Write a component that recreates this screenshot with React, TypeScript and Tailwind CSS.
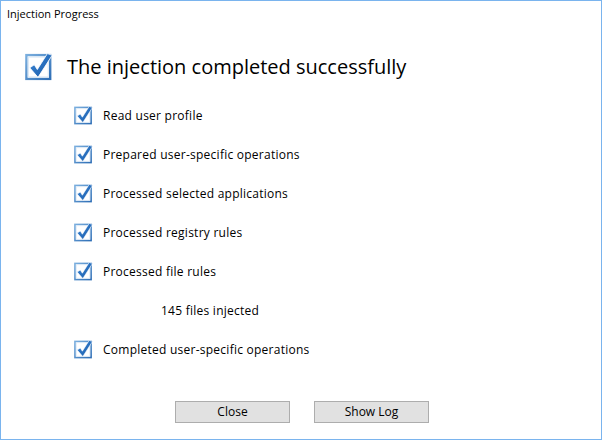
import React from "react";

function Check({ size }: { size: number }) {
  return (
    <svg width={size} height={size} viewBox="0 0 20 20" className="shrink-0 overflow-visible">
      <defs>
        <linearGradient id={`g${size}`} x1="0" y1="0" x2="1" y2="1">
          <stop offset="0" stopColor="#7aaede" />
          <stop offset="1" stopColor="#2f6fb6" />
        </linearGradient>
        <linearGradient id={`c${size}`} x1="0" y1="0" x2="1" y2="1">
          <stop offset="0" stopColor="#3f8ad8" />
          <stop offset="1" stopColor="#1557a6" />
        </linearGradient>
      </defs>
      <rect x="1" y="1.5" width="17" height="17" fill="#fff" stroke={`url(#g${size})`} strokeWidth="1.7" />
      <rect x="2.4" y="2.9" width="14.2" height="14.2" fill="none" stroke="#dce9f6" strokeWidth="0.8" />
      <path d="M3.4 10.6 L6.6 8.4 L8.8 11.8 L16.0 0.4 L19.4 1.6 L9.3 17.4 Z" fill={`url(#c${size})`} stroke="#fff" strokeWidth="0.6" />
    </svg>
  );
}

function Item({ label }: { label: string }) {
  return (
    <div className="flex items-center h-[39px] gap-[10px]">
      <Check size={19} />
      <span className="text-[12px] tracking-[0.25px] text-[#000]">{label}</span>
    </div>
  );
}

export default function App() {
  return (
    <div
      className="w-[602px] h-[440px] bg-white border border-[#7ab4ee] flex flex-col relative"
      style={{ fontFamily: '"Open Sans", "Noto Sans", sans-serif' }}
    >
      <div className="h-[26px] pl-[6px] pt-[5px] text-[11px] text-[#000] leading-[15px]">Injection Progress</div>
      <div className="flex items-center pl-[24px] gap-[14px] mt-[26px] h-[28px]">
        <Check size={28} />
        <span className="text-[20px] text-[#000] leading-[28px]">The injection completed successfully</span>
      </div>
      <div className="flex flex-col pl-[73px] mt-[15px]">
        <Item label="Read user profile" />
        <Item label="Prepared user-specific operations" />
        <Item label="Processed selected applications" />
        <Item label="Processed registry rules" />
        <Item label="Processed file rules" />
        <div className="h-[39px] flex items-center pl-[87px] text-[12px] tracking-[0.25px] text-[#000]">145 files injected</div>
        <Item label="Completed user-specific operations" />
      </div>
      <div className="flex justify-center gap-[24px] mt-auto mb-[16px] pl-[2px]">
        <button className="w-[115px] h-[22px] bg-[#e1e1e1] border border-[#adadad] text-[12px] text-[#000] leading-none">Close</button>
        <button className="w-[115px] h-[22px] bg-[#e1e1e1] border border-[#adadad] text-[12px] text-[#000] leading-none">Show Log</button>
      </div>
    </div>
  );
}
